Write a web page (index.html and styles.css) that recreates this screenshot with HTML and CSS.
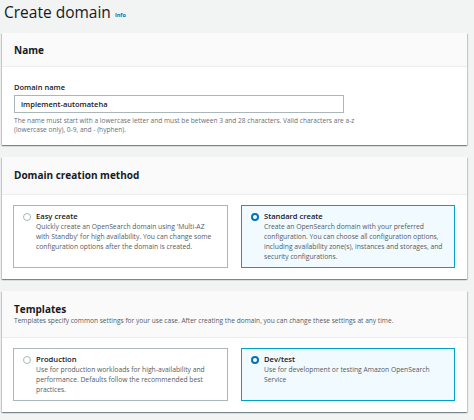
FILE: index.html
```html
<!DOCTYPE html>
<html lang="en">
<head>
  <meta charset="UTF-8" />
  <title>Create domain</title>
  <link rel="stylesheet" href="styles.css">
</head>
<body>
  <div class="page">
    <h1 class="page-title">Create domain <span class="info">Info</span></h1>

    <div class="panel">
      <div class="panel-header header-name">
        <h2>Name</h2>
      </div>
      <div class="panel-body body-name">
        <label class="field-label">Domain name</label>
        <div class="text-input">implement-automateha</div>
        <div class="hint">The name must start with a lowercase letter and must be between 3 and 28 characters. Valid characters are a-z (lowercase only), 0-9, and - (hyphen).</div>
      </div>
    </div>

    <div class="panel">
      <div class="panel-header header-method">
        <h2>Domain creation method</h2>
      </div>
      <div class="panel-body cards">
        <div class="card">
          <span class="radio"></span>
          <div>
            <div class="card-title">Easy create</div>
            <div class="card-text">Quickly create an OpenSearch domain using 'Multi-AZ with Standby' for high availability. You can change some configuration options after the domain is created.</div>
          </div>
        </div>
        <div class="card selected">
          <span class="radio"></span>
          <div>
            <div class="card-title">Standard create</div>
            <div class="card-text">Create an OpenSearch domain with your preferred configuration. You can choose all configuration options, including availability zone(s), instances and storages, and security configurations.</div>
          </div>
        </div>
      </div>
    </div>

    <div class="panel">
      <div class="panel-header header-templates">
        <h2>Templates</h2>
        <div class="panel-desc">Templates specify common settings for your use case. After creating the domain, you can change these settings at any time.</div>
      </div>
      <div class="panel-body cards">
        <div class="card">
          <span class="radio"></span>
          <div>
            <div class="card-title">Production</div>
            <div class="card-text">Use for production workloads for high-availability and performance. Defaults follow the recommended best practices.</div>
          </div>
        </div>
        <div class="card selected">
          <span class="radio"></span>
          <div>
            <div class="card-title">Dev/test</div>
            <div class="card-text">Use for development or testing Amazon OpenSearch Service</div>
          </div>
        </div>
      </div>
    </div>
  </div>
</body>
</html>
```

FILE: styles.css
```css
html, body {
  margin: 0;
  padding: 0;
  background: #f2f3f3;
  color: #16191f;
  font-family: "Open Sans", "Noto Sans", sans-serif;
  overflow: hidden;
}
.page {
  width: 465px;
  padding-left: 2px;
}
.page-title {
  margin: 0;
  height: 33px;
  font-size: 15.5px;
  font-weight: 400;
  line-height: 24px;
  padding-left: 2px;
}
.info {
  font-size: 5.5px;
  font-weight: 700;
  color: #0073bb;
  vertical-align: 1px;
}
.panel {
  background: #fff;
  box-shadow: 0 1px 1px rgba(0, 28, 36, 0.3), 1px 1px 1px rgba(0, 28, 36, 0.15), -1px 1px 1px rgba(0, 28, 36, 0.15);
  margin-bottom: 12px;
}
.panel-header {
  background: #fafafa;
  border-bottom: 1px solid #eaeded;
  padding: 0 12px;
  box-sizing: border-box;
}
.panel-header h2 {
  margin: 0;
  font-size: 10px;
  font-weight: 700;
  line-height: 14px;
}
.header-name {
  height: 34px;
  padding-top: 10px;
}
.header-method {
  height: 38px;
  padding-top: 11px;
}
.header-templates {
  height: 47px;
  padding-top: 11px;
}
.panel-desc {
  font-size: 6.6px;
  line-height: 10px;
  color: #545b64;
}
.body-name {
  height: 78px;
  padding: 15px 12px 0;
  box-sizing: border-box;
}
.field-label {
  display: block;
  font-size: 7.5px;
  font-weight: 600;
  line-height: 10px;
}
.text-input {
  margin-top: 3px;
  width: 330px;
  height: 18px;
  box-sizing: border-box;
  border: 1px solid #aab7b8;
  padding-left: 6px;
  font-size: 7.5px;
  font-weight: 600;
  line-height: 16px;
}
.hint {
  margin-top: 3px;
  font-size: 6.6px;
  line-height: 9px;
  color: #687078;
  width: 370px;
}
.cards {
  display: grid;
  grid-template-columns: 215px 214px;
  gap: 13px;
  padding: 10px 12px 11px 11px;
}
.card {
  display: flex;
  gap: 5px;
  border: 1px solid #aab7b8;
  padding: 5px 8px 5px 9px;
  box-sizing: border-box;
}
.card.selected {
  background: #f1faff;
  border-color: #00a1c9;
}
.radio {
  flex: none;
  width: 8px;
  height: 8px;
  margin-top: 2px;
  border: 1px solid #aab7b8;
  border-radius: 50%;
  box-sizing: border-box;
  background: #fff;
}
.selected .radio {
  border: 2.5px solid #0073bb;
}
.card-title {
  font-size: 7.6px;
  font-weight: 600;
  line-height: 11px;
}
.card-text {
  font-size: 6.75px;
  line-height: 10px;
  color: #545b64;
}
```
